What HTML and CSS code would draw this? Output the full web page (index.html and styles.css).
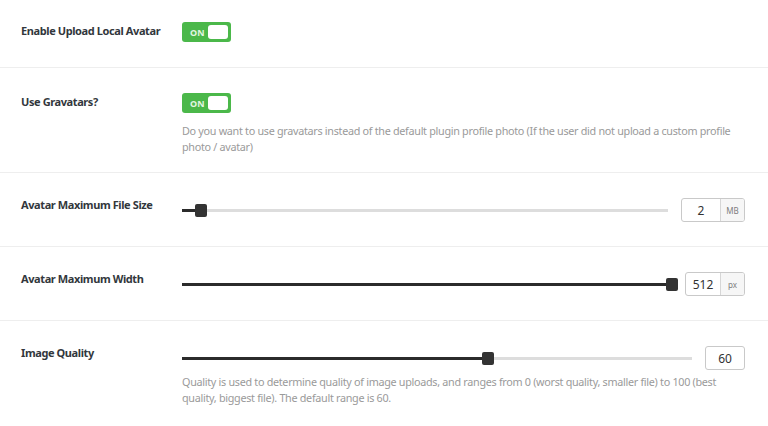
FILE: index.html
```html
<!DOCTYPE html>
<html lang="en">
<head>
<meta charset="utf-8">
<title>Avatar settings</title>
<link rel="stylesheet" href="styles.css">
</head>
<body>
<div class="settings">
  <div class="row row-first">
    <div class="label">Enable Upload Local Avatar</div>
    <div class="field">
      <span class="toggle"><span class="toggle-text">ON</span><span class="knob"></span></span>
    </div>
  </div>

  <div class="row row-desc">
    <div class="label">Use Gravatars?</div>
    <div class="field">
      <span class="toggle"><span class="toggle-text">ON</span><span class="knob"></span></span>
      <p class="desc">Do you want to use gravatars instead of the default plugin profile photo (If the user did not upload a custom profile photo / avatar)</p>
    </div>
  </div>

  <div class="row row-slider">
    <div class="label">Avatar Maximum File Size</div>
    <div class="field">
      <div class="slider-line">
        <div class="track"><div class="fill" style="width:3.9%"></div><span class="thumb" style="left:3.9%"></span></div>
        <div class="num num-addon"><span class="num-value">2</span><span class="addon">MB</span></div>
      </div>
    </div>
  </div>

  <div class="row row-slider">
    <div class="label">Avatar Maximum Width</div>
    <div class="field">
      <div class="slider-line">
        <div class="track"><div class="fill" style="width:100%"></div><span class="thumb" style="left:100%"></span></div>
        <div class="num num-addon num-wide"><span class="num-value">512</span><span class="addon">px</span></div>
      </div>
    </div>
  </div>

  <div class="row row-slider row-last">
    <div class="label">Image Quality</div>
    <div class="field">
      <div class="slider-line">
        <div class="track"><div class="fill" style="width:60%"></div><span class="thumb" style="left:60%"></span></div>
        <div class="num num-plain"><span class="num-value">60</span></div>
      </div>
      <p class="desc desc-tight">Quality is used to determine quality of image uploads, and ranges from 0 (worst quality, smaller file) to 100 (best quality, biggest file). The default range is 60.</p>
    </div>
  </div>
</div>
</body>
</html>
```

FILE: styles.css
```css
* { box-sizing: border-box; }

body {
  margin: 0;
  background: #fff;
  font-family: "Noto Sans", "Open Sans", sans-serif;
  color: #32373c;
}

.settings {
  display: flex;
  flex-direction: column;
}

.row {
  display: grid;
  grid-template-columns: 161px 1fr;
  padding: 25px 23px 24px 21px;
  border-bottom: 1px solid #eeeeee;
}

.row-first { padding-top: 22px; padding-bottom: 25px; }
.row-desc { padding-bottom: 17px; }
.row-last { border-bottom: none; }

.label {
  font-size: 11px;
  font-weight: 700;
  line-height: 16px;
  letter-spacing: -0.4px;
  color: #32373c;
  padding-top: 1px;
}

.row-slider .label { padding-top: 0; margin-top: -1px; }

.field { min-width: 0; }

/* on/off switch */
.toggle {
  display: flex;
  align-items: center;
  justify-content: space-between;
  width: 49px;
  height: 20px;
  padding: 0 3px 0 8px;
  border-radius: 3px;
  background: #4bb84a;
}

.toggle-text {
  font-size: 9px;
  font-weight: 700;
  color: #e3f5e2;
  letter-spacing: 0.2px;
}

.knob {
  width: 20px;
  height: 14px;
  border-radius: 3px;
  background: #fff;
}

.desc {
  margin: 10px 0 0;
  font-size: 10.8px;
  line-height: 16px;
  letter-spacing: -0.3px;
  color: #9a9a9a;
}

.desc-tight { margin-top: 4px; }

/* range slider with number box */
.slider-line {
  display: flex;
  align-items: center;
  gap: 13px;
  height: 24px;
}

.track {
  position: relative;
  flex: 1;
  height: 3px;
  background: #dddddd;
}

.fill {
  height: 100%;
  background: #2b2b2b;
}

.thumb {
  position: absolute;
  top: 50%;
  width: 12px;
  height: 13px;
  margin: -6.5px 0 0 -6px;
  border-radius: 2px;
  background: #333333;
}

.num {
  display: flex;
  height: 24px;
  border: 1px solid #c9c9c9;
  border-radius: 3px;
  overflow: hidden;
  font-size: 12px;
  color: #333;
}

.num-value {
  flex: 1;
  display: flex;
  align-items: center;
  justify-content: center;
}

.addon {
  display: flex;
  align-items: center;
  justify-content: center;
  width: 24px;
  border-left: 1px solid #d6d6d6;
  background: #f6f6f6;
  font-size: 8px;
  color: #7d7d7d;
}

.num-addon { width: 64px; }
.num-wide { width: 60px; }
.num-plain { width: 40px; }
```
